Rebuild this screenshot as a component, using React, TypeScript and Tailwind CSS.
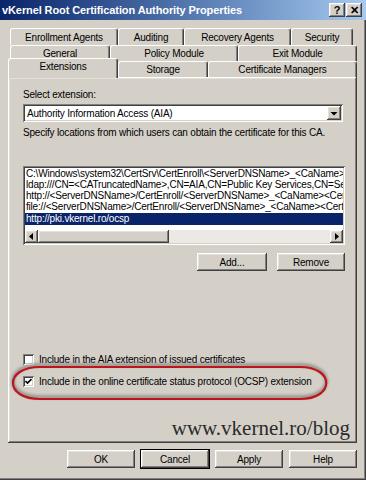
const raised =
  "shadow-[inset_-1px_-1px_#404040,inset_1px_1px_#ffffff,inset_-2px_-2px_#808080,inset_2px_2px_#e4e1dc]";
const sunken =
  "shadow-[inset_1px_1px_#808080,inset_-1px_-1px_#ffffff,inset_2px_2px_#404040,inset_-2px_-2px_#d4d0c8]";

function Tab({ label, className }: { label: string; className: string }) {
  return (
    <div
      className={`flex items-center justify-center whitespace-nowrap rounded-t-[3px] border-l border-t border-r border-l-white border-t-white border-r-[#404040] shadow-[inset_-1px_0_#808080] ${className}`}
    >
      {label}
    </div>
  );
}

function Button({ label, className = "" }: { label: string; className?: string }) {
  return (
    <div className={`flex h-[18px] w-[68px] items-center justify-center bg-[#d4d0c8] ${raised} ${className}`}>
      {label}
    </div>
  );
}

function Arrow({ dir }: { dir: "left" | "right" | "down" }) {
  const pts = dir === "left" ? "6,2 2,5.5 6,9" : dir === "right" ? "3,2 7,5.5 3,9" : "1.5,4 8.5,4 5,7.5";
  return (
    <svg width="10" height="11" viewBox="0 0 10 11">
      <polygon points={pts} fill="#000" />
    </svg>
  );
}

const rows = [
  "C:\\Windows\\system32\\CertSrv\\CertEnroll\\<ServerDNSName>_<CaName><CertificateName>.crt",
  "ldap:///CN=<CATruncatedName>,CN=AIA,CN=Public Key Services,CN=Services,<ConfigurationContainer><CAObjectClass>",
  "http://<ServerDNSName>/CertEnroll/<ServerDNSName>_<CaName><CertificateName>.crt",
  "file://<ServerDNSName>/CertEnroll/<ServerDNSName>_<CaName><CertificateName>.crt",
];

export default function App() {
  return (
    <div
      className="relative h-[480px] w-[366px] overflow-hidden bg-[#d4d0c8] text-[10px] tracking-[-0.2px] text-black shadow-[inset_-1px_-1px_#404040,inset_-2px_-2px_#808080]"
      style={{ fontFamily: '"Liberation Sans", Arial, sans-serif' }}
    >
      {/* title bar */}
      <div className="flex h-[20px] items-center bg-gradient-to-r from-[#0a246a] to-[#a6caf0] pl-[2px] pr-[4px]">
        <span className="flex-1 whitespace-nowrap text-[11px] font-bold tracking-[-0.1px] text-white">
          vKernel Root Certification Authority Properties
        </span>
        <div className={`flex h-[14px] w-[16px] items-center justify-center bg-[#d4d0c8] text-[11px] font-bold ${raised}`}>?</div>
        <div className={`ml-[1px] flex h-[14px] w-[16px] items-center justify-center bg-[#d4d0c8] text-[11px] font-bold ${raised}`}>
          ✕
        </div>
      </div>

      {/* tabs */}
      <div className="pt-[8px]">
        <div className="flex h-[17px] pl-[10px]">
          <Tab label="Enrollment Agents" className="w-[108px]" />
          <Tab label="Auditing" className="w-[66px]" />
          <Tab label="Recovery Agents" className="w-[107px]" />
          <Tab label="Security" className="w-[62px]" />
        </div>
        <div className="flex h-[16px] pl-[10px]">
          <Tab label="General" className="w-[100px]" />
          <Tab label="Policy Module" className="w-[128px]" />
          <Tab label="Exit Module" className="w-[119px]" />
        </div>
        <div className="relative z-10 flex h-[16px] items-end pl-[8px]">
          <Tab label="Extensions" className="-mb-[1px] h-[20px] w-[110px] bg-[#d4d0c8] pb-[4px]" />
          <Tab label="Storage" className="h-[16px] w-[90px]" />
          <Tab label="Certificate Managers" className="h-[16px] w-[149px]" />
        </div>
      </div>

      {/* property page */}
      <div className={`ml-[8px] flex h-[366px] w-[349px] flex-col pl-[15px] pr-[7px] ${raised}`}>
        <div className="mt-[11px] h-[14px] leading-[14px]">Select extension:</div>
        <div className={`mt-[2px] flex h-[18px] w-[320px] items-center bg-white pl-[4px] pr-[2px] ${sunken}`}>
          <span className="flex-1">Authority Information Access (AIA)</span>
          <div className={`flex h-[14px] w-[14px] items-center justify-center bg-[#d4d0c8] ${raised}`}>
            <Arrow dir="down" />
          </div>
        </div>
        <div className="mt-[4px] h-[13px] whitespace-nowrap leading-[13px]">
          Specify locations from which users can obtain the certificate for this CA.
        </div>

        <div className={`mt-[27px] flex h-[79px] w-[322px] flex-col bg-white p-[2px] ${sunken}`}>
          <div className="flex-1 overflow-hidden">
            {rows.map((r) => (
              <div key={r} className="h-[11px] overflow-hidden whitespace-nowrap pl-[1px] leading-[11px]">
                {r}
              </div>
            ))}
            <div className="mt-[1px] h-[12px] whitespace-nowrap bg-[#0a246a] pl-[1px] leading-[12px] text-white">
              http://pki.vkernel.ro/ocsp
            </div>
          </div>
          <div className="flex h-[13px] bg-[#ece9e4]">
            <div className={`flex h-[13px] w-[13px] items-center justify-center bg-[#d4d0c8] ${raised}`}>
              <Arrow dir="left" />
            </div>
            <div className={`h-[13px] w-[131px] bg-[#d4d0c8] ${raised}`} />
            <div className="flex-1" />
            <div className={`flex h-[13px] w-[13px] items-center justify-center bg-[#d4d0c8] ${raised}`}>
              <Arrow dir="right" />
            </div>
          </div>
        </div>

        <div className="mt-[8px] flex w-[322px] justify-end gap-[10px]">
          <Button label="Add..." className="w-[70px]" />
          <Button label="Remove" />
        </div>

        <div className="mt-[81px] flex h-[14px] items-center gap-[5px] whitespace-nowrap">
          <div className={`h-[11px] w-[11px] shrink-0 bg-white ${sunken}`} />
          <span>Include in the AIA extension of issued certificates</span>
        </div>
        <div className="mt-[8px] flex h-[14px] items-center gap-[5px] whitespace-nowrap">
          <div className={`flex h-[11px] w-[11px] shrink-0 items-center justify-center bg-white ${sunken}`}>
            <svg width="7" height="7" viewBox="0 0 7 7">
              <path d="M0.5 3 L2.5 5 L6.5 1" stroke="#000" strokeWidth="1.6" fill="none" />
            </svg>
          </div>
          <span>Include in the online certificate status protocol (OCSP) extension</span>
        </div>

        <div
          className="mt-[29px] text-right text-[21px] leading-[22px] tracking-normal text-[#2b2b2b]"
          style={{ fontFamily: '"Liberation Serif", "Times New Roman", serif' }}
        >
          www.vkernel.ro/blog
        </div>
      </div>

      {/* dialog buttons */}
      <div className="mt-[7px] flex justify-end gap-[6px] pr-[9px]">
        <Button label="OK" className="w-[67px]" />
        <Button label="Cancel" className="w-[68px] outline outline-1 outline-black" />
        <Button label="Apply" className="w-[66px]" />
        <Button label="Help" className="w-[67px]" />
      </div>

      {/* red highlight annotation */}
      <svg className="pointer-events-none absolute left-0 top-0" width="366" height="480">
        <defs>
          <filter id="blur" x="-10%" y="-50%" width="120%" height="200%">
            <feGaussianBlur stdDeviation="1.6" />
          </filter>
        </defs>
        <path
          d="M40 365 L300 365 C335 365 335 397 300 397 L40 397 C4 397 4 365 40 365 Z"
          fill="none"
          stroke="#6b6b6b"
          strokeWidth="3"
          opacity="0.7"
          filter="url(#blur)"
        />
        <path
          d="M40 367 L300 367 C335 367 335 399 300 399 L40 399 C4 399 4 367 40 367 Z"
          fill="none"
          stroke="#c0141c"
          strokeWidth="2.2"
        />
      </svg>
    </div>
  );
}
